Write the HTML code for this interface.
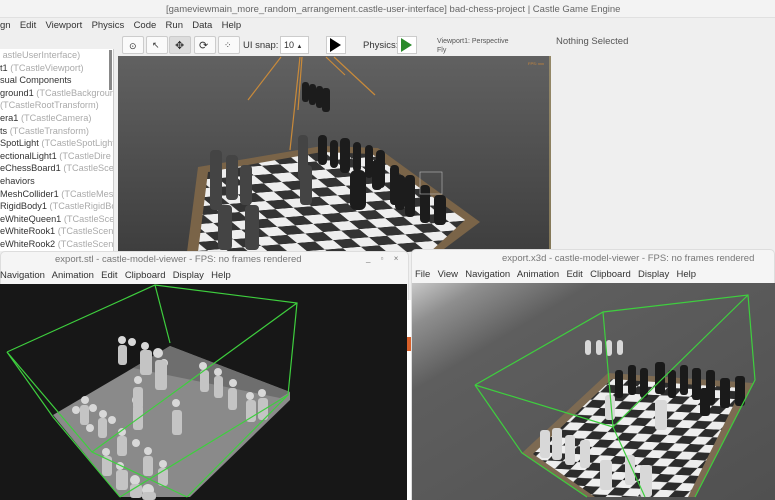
<!DOCTYPE html>
<html><head><meta charset="utf-8"><style>
*{margin:0;padding:0;box-sizing:border-box}
body{width:775px;height:500px;overflow:hidden;background:#efefef;font-family:"Liberation Sans",sans-serif;font-size:9px;color:#333;position:relative}
.a{position:absolute;white-space:nowrap}
.g{color:#aaa}
.btn{position:absolute;top:36px;height:18px;width:22px;background:#fafafa;border:1px solid #ccc;border-radius:2px}
</style></head><body>
<div class="a" style="left:0;top:0;width:775px;height:18px;background:#f3f3f3;border-bottom:1px solid #e0e0e0"></div>
<div class="a" style="left:166px;top:4px;color:#666;font-size:9.5px">[gameviewmain_more_random_arrangement.castle-user-interface] bad-chess-project | Castle Game Engine</div>
<div class="a" style="left:0;top:20px;font-size:9.5px;word-spacing:2px">gn&nbsp; Edit&nbsp; Viewport&nbsp; Physics&nbsp; Code&nbsp; Run&nbsp; Data&nbsp; Help</div>
<div class="btn" style="left:122px"></div><div class="btn" style="left:146px"></div>
<div class="btn" style="left:169px;background:#ddd"></div><div class="btn" style="left:194px"></div><div class="btn" style="left:218px"></div>
<div class="a" style="left:129px;top:41px;font-size:9px">⊙</div><div class="a" style="left:152px;top:40px">↖</div><div class="a" style="left:175px;top:39px;font-size:11px">✥</div><div class="a" style="left:199px;top:39px;font-size:11px">⟳</div><div class="a" style="left:224px;top:40px">⁘</div>
<div class="a" style="left:243px;top:40px;font-size:9.5px">UI snap:</div>
<div class="a" style="left:280px;top:36px;width:29px;height:18px;background:#fff;border:1px solid #ccc;padding:3px 0 0 3px">10 <span style="font-size:6px">▲</span></div>
<div class="a" style="left:326px;top:36px;width:20px;height:18px;background:#fff;border:1px solid #ccc"></div>
<div class="a" style="left:330px;top:38px;width:0;height:0;border-left:11px solid #000;border-top:7px solid transparent;border-bottom:7px solid transparent"></div>
<div class="a" style="left:363px;top:40px;font-size:9.5px">Physics:</div>
<div class="a" style="left:397px;top:36px;width:20px;height:18px;background:#fff;border:1px solid #ccc"></div>
<div class="a" style="left:401px;top:38px;width:0;height:0;border-left:11px solid #2a8a2a;border-top:7px solid transparent;border-bottom:7px solid transparent"></div>
<div class="a" style="left:437px;top:37px;font-size:7px;color:#555;line-height:9px">Viewport1: Perspective<br>Fly</div>
<div class="a" style="left:556px;top:36px;font-size:9.5px;color:#555">Nothing Selected</div>
<div class="a" style="left:0;top:49px;width:114px;height:202px;background:#fff;border-right:1px solid #ccc;overflow:hidden;line-height:12.6px;font-size:9.2px">
<div>&nbsp;<span class="g">astleUserInterface)</span></div>
<div>t1 <span class="g">(TCastleViewport)</span></div>
<div>sual Components</div>
<div>ground1 <span class="g">(TCastleBackgrour</span></div>
<div><span class="g">(TCastleRootTransform)</span></div>
<div>era1 <span class="g">(TCastleCamera)</span></div>
<div>ts <span class="g">(TCastleTransform)</span></div>
<div>SpotLight <span class="g">(TCastleSpotLight)</span></div>
<div>ectionalLight1 <span class="g">(TCastleDire</span></div>
<div>eChessBoard1 <span class="g">(TCastleScen</span></div>
<div>ehaviors</div>
<div>MeshCollider1 <span class="g">(TCastleMes</span></div>
<div>RigidBody1 <span class="g">(TCastleRigidBc</span></div>
<div>eWhiteQueen1 <span class="g">(TCastleSce</span></div>
<div>eWhiteRook1 <span class="g">(TCastleScen</span></div>
<div>eWhiteRook2 <span class="g">(TCastleScen</span></div>
</div>
<div class="a" style="left:109px;top:50px;width:3px;height:40px;background:#888"></div>
<svg class="a" style="left:118px;top:56px" width="433" height="196" viewBox="118 56 433 196">
<defs><linearGradient id="tv" x1="0" y1="0" x2="0" y2="1"><stop offset="0" stop-color="#616161"/><stop offset="1" stop-color="#3e3e3e"/></linearGradient>
<pattern id="ck" width="36" height="36" patternUnits="userSpaceOnUse" patternTransform="matrix(1,-0.08,0.55,0.45,0,0)"><rect width="36" height="36" fill="#eee"/><rect width="18" height="18" fill="#333"/><rect x="18" y="18" width="18" height="18" fill="#333"/></pattern></defs>
<rect x="118" y="56" width="433" height="196" fill="url(#tv)"/>
<line x1="550" y1="56" x2="550" y2="252" stroke="#c8b070"/>
<g stroke="#c98a3a" stroke-width="1.2"><line x1="281" y1="57" x2="248" y2="100"/><line x1="300" y1="57" x2="290" y2="150"/><line x1="302" y1="57" x2="298" y2="110"/><line x1="326" y1="57" x2="345" y2="75"/><line x1="334" y1="57" x2="375" y2="95"/></g>
<polygon points="198,167 322,146 378,148 480,222 440,252 187,252" fill="#7a6448"/>
<polygon points="208,172 322,152 372,154 465,220 430,252 198,252" fill="url(#ck)"/>
<g fill="#1c1c1c">
<rect x="302" y="82" width="7" height="20" rx="3"/><rect x="309" y="84" width="7" height="21" rx="3"/><rect x="316" y="86" width="7" height="22" rx="3"/><rect x="322" y="88" width="8" height="24" rx="3"/>
<rect x="318" y="135" width="9" height="30" rx="4"/><rect x="330" y="140" width="8" height="28" rx="4"/><rect x="340" y="138" width="10" height="35" rx="4"/><rect x="353" y="142" width="8" height="30" rx="4"/><rect x="365" y="145" width="8" height="33" rx="4"/><rect x="376" y="150" width="9" height="38" rx="4"/><rect x="390" y="165" width="9" height="40" rx="4"/><rect x="405" y="175" width="10" height="42" rx="4"/><rect x="420" y="185" width="10" height="38" rx="4"/><rect x="434" y="195" width="12" height="30" rx="4"/>
<rect x="350" y="170" width="16" height="40" rx="6"/><rect x="372" y="160" width="10" height="30" rx="4"/><rect x="395" y="175" width="10" height="35" rx="4"/>
</g>
<g fill="#444"><rect x="210" y="150" width="12" height="60" rx="4"/><rect x="226" y="155" width="12" height="45" rx="4"/><rect x="240" y="165" width="12" height="40" rx="4"/><rect x="218" y="205" width="14" height="45" rx="4"/><rect x="245" y="205" width="14" height="45" rx="4"/><rect x="298" y="135" width="10" height="45" rx="4"/><rect x="300" y="165" width="12" height="40" rx="4"/></g>
<rect x="420" y="172" width="22" height="22" fill="none" stroke="#bbb" stroke-width=".6"/>
<text x="528" y="65" font-size="4" fill="#d08a3a">FPS: xxx</text>
</svg>
<div class="a" style="left:0;top:251px;width:409px;height:249px;background:#f5f5f5;border-radius:5px 5px 0 0;border:1px solid #ddd"></div>
<div class="a" style="left:55px;top:254px;color:#777;font-size:9.5px">export.stl - castle-model-viewer - FPS: no frames rendered</div>
<div class="a" style="left:366px;top:254px;color:#777;font-size:8px;word-spacing:8px">_ ▫ ×</div>
<div class="a" style="left:0;top:270px;font-size:9.5px;word-spacing:1px">Navigation&nbsp; Animation&nbsp; Edit&nbsp; Clipboard&nbsp; Display&nbsp; Help</div>
<svg class="a" style="left:0;top:284px" width="407" height="216" viewBox="0 284 407 216">
<rect x="0" y="284" width="407" height="216" fill="#171717"/>
<polygon points="53,415 133,368 170,346 290,392 290,400 190,497 120,497" fill="#8a8a8a"/>
<polygon points="133,368 170,346 290,392 280,398" fill="#6e6e6e"/>
<g fill="#d8d8d8"><circle cx="122" cy="340" r="4"/><circle cx="132" cy="342" r="4"/><circle cx="145" cy="346" r="4"/><circle cx="158" cy="353" r="5"/><circle cx="164" cy="363" r="4"/><circle cx="203" cy="366" r="4"/><circle cx="218" cy="372" r="4"/><circle cx="233" cy="383" r="4"/><circle cx="250" cy="396" r="4"/><circle cx="262" cy="393" r="4"/><circle cx="138" cy="380" r="4"/><circle cx="176" cy="403" r="4"/><circle cx="137" cy="400" r="5"/><circle cx="176" cy="420" r="4"/><circle cx="85" cy="400" r="4"/><circle cx="93" cy="408" r="4"/><circle cx="103" cy="414" r="4"/><circle cx="112" cy="420" r="4"/><circle cx="122" cy="432" r="4"/><circle cx="136" cy="443" r="4"/><circle cx="148" cy="451" r="4"/><circle cx="163" cy="464" r="4"/><circle cx="76" cy="410" r="4"/><circle cx="90" cy="428" r="4"/><circle cx="106" cy="452" r="4"/><circle cx="120" cy="466" r="4"/><circle cx="135" cy="480" r="5"/><circle cx="148" cy="490" r="6"/></g>
<g fill="#c4c4c4"><rect x="118" y="345" width="9" height="20" rx="3"/><rect x="140" y="350" width="12" height="25" rx="3"/><rect x="155" y="360" width="12" height="30" rx="3"/><rect x="200" y="370" width="9" height="22" rx="3"/><rect x="214" y="376" width="9" height="22" rx="3"/><rect x="228" y="388" width="9" height="22" rx="3"/><rect x="246" y="400" width="10" height="22" rx="3"/><rect x="258" y="398" width="10" height="22" rx="3"/><rect x="133" y="387" width="10" height="22" rx="3"/><rect x="172" y="410" width="10" height="25" rx="3"/><rect x="133" y="405" width="10" height="25" rx="3"/><rect x="80" y="405" width="9" height="20" rx="3"/><rect x="98" y="418" width="9" height="20" rx="3"/><rect x="117" y="436" width="10" height="20" rx="3"/><rect x="143" y="456" width="10" height="20" rx="3"/><rect x="158" y="468" width="10" height="18" rx="3"/><rect x="102" y="456" width="10" height="20" rx="3"/><rect x="116" y="470" width="12" height="20" rx="3"/><rect x="130" y="484" width="12" height="14" rx="3"/><rect x="142" y="492" width="14" height="8" rx="3"/></g>
<g stroke="#3ecf3e" stroke-width="1.2" fill="none"><polyline points="7,352 155,285 297,303 288,395 120,497"/><polyline points="155,285 170,343"/><polyline points="7,352 53,417 120,497"/><polyline points="7,352 92,452 187,497"/><line x1="92" y1="452" x2="297" y2="303"/><line x1="288" y1="395" x2="187" y2="497"/></g>
</svg>
<div class="a" style="left:407px;top:300px;width:4px;height:200px;background:#fff"></div>
<div class="a" style="left:407px;top:337px;width:4px;height:14px;background:#d8602a"></div>
<div class="a" style="left:411px;top:249px;width:364px;height:251px;background:#f5f5f5;border-radius:5px 5px 0 0;border:1px solid #ddd"></div>
<div class="a" style="left:502px;top:253px;color:#777;font-size:9.5px">export.x3d - castle-model-viewer - FPS: no frames rendered</div>
<div class="a" style="left:415px;top:269px;font-size:9.5px;word-spacing:1px">File&nbsp; View&nbsp; Navigation&nbsp; Animation&nbsp; Edit&nbsp; Clipboard&nbsp; Display&nbsp; Help</div>
<svg class="a" style="left:412px;top:283px" width="363" height="217" viewBox="412 283 363 217">
<defs><linearGradient id="br" x1="0" y1="0" x2="1" y2="1"><stop offset="0" stop-color="#c8c8c8"/><stop offset=".1" stop-color="#8e8e8e"/><stop offset=".25" stop-color="#5e5e5e"/><stop offset="1" stop-color="#505050"/></linearGradient>
<pattern id="ck2" width="30" height="30" patternUnits="userSpaceOnUse" patternTransform="matrix(1,0.05,-0.5,0.5,0,0)"><rect width="30" height="30" fill="#eee"/><rect width="15" height="15" fill="#2c2c2c"/><rect x="15" y="15" width="15" height="15" fill="#2c2c2c"/></pattern></defs>
<rect x="412" y="283" width="363" height="217" fill="url(#br)"/>
<polygon points="522,453 608,373 753,383 695,497 588,497" fill="#7d6a52"/>
<polygon points="533,454 612,379 742,388 688,497 595,497" fill="url(#ck2)"/>
<g fill="#1a1a1a"><rect x="615" y="370" width="8" height="28" rx="3"/><rect x="628" y="365" width="8" height="30" rx="3"/><rect x="640" y="368" width="8" height="30" rx="3"/><rect x="655" y="362" width="10" height="32" rx="3"/><rect x="668" y="370" width="8" height="28" rx="3"/><rect x="680" y="365" width="8" height="30" rx="3"/><rect x="692" y="368" width="9" height="32" rx="3"/><rect x="706" y="370" width="9" height="35" rx="3"/><rect x="720" y="378" width="10" height="30" rx="3"/><rect x="735" y="376" width="10" height="30" rx="3"/><rect x="700" y="388" width="10" height="28" rx="3"/></g>
<g fill="#d8d8d8"><rect x="585" y="340" width="6" height="15" rx="3"/><rect x="596" y="340" width="6" height="15" rx="3"/><rect x="606" y="340" width="6" height="16" rx="3"/><rect x="617" y="340" width="6" height="15" rx="3"/><rect x="605" y="395" width="10" height="25" rx="3"/><rect x="655" y="400" width="12" height="30" rx="3"/><rect x="540" y="430" width="10" height="28" rx="3"/><rect x="552" y="428" width="10" height="32" rx="3"/><rect x="565" y="435" width="10" height="30" rx="3"/><rect x="580" y="440" width="10" height="28" rx="3"/><rect x="600" y="460" width="12" height="30" rx="3"/><rect x="625" y="455" width="10" height="30" rx="3"/><rect x="640" y="465" width="12" height="32" rx="3"/></g>
<g stroke="#3ecf3e" stroke-width="1.2" fill="none"><polyline points="475,385 603,312 748,295 755,380 695,497"/><line x1="603" y1="312" x2="613" y2="427"/><line x1="475" y1="385" x2="613" y2="427"/><line x1="613" y1="427" x2="645" y2="497"/><line x1="613" y1="427" x2="748" y2="295"/><polyline points="475,385 522,453 587,497"/></g>
</svg>
</body></html>
